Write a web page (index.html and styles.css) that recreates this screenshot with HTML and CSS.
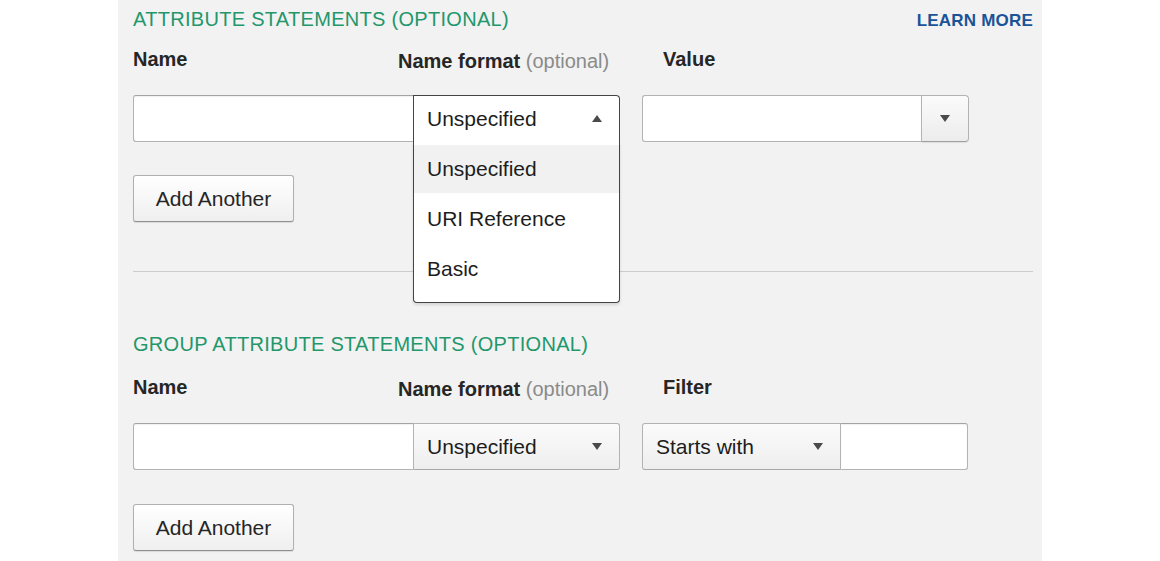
FILE: index.html
```html
<!DOCTYPE html>
<html lang="en">
<head>
<meta charset="utf-8">
<title>Attribute Statements</title>
<link rel="stylesheet" href="styles.css">
</head>
<body>
<div class="panel">
  <section class="section first">
    <div class="section-head">
      <h2 class="section-title">ATTRIBUTE STATEMENTS (OPTIONAL)</h2>
      <a class="learn-more" href="#">LEARN MORE</a>
    </div>
    <div class="labels">
      <div class="label">Name</div>
      <div class="label label-format">Name format <span class="optional">(optional)</span></div>
      <div class="label">Value</div>
    </div>
    <div class="row">
      <div class="text-input name-input"></div>
      <div class="select-wrap">
        <div class="select select-open">
          <span class="select-text">Unspecified</span>
          <span class="arrow arrow-up"></span>
        </div>
        <ul class="menu">
          <li class="menu-item active">Unspecified</li>
          <li class="menu-item">URI Reference</li>
          <li class="menu-item">Basic</li>
        </ul>
      </div>
      <div class="combo">
        <div class="combo-input"></div>
        <div class="combo-btn"><span class="arrow"></span></div>
      </div>
    </div>
    <button class="btn" type="button">Add Another</button>
  </section>

  <hr class="divider">

  <section class="section second">
    <div class="section-head">
      <h2 class="section-title">GROUP ATTRIBUTE STATEMENTS (OPTIONAL)</h2>
    </div>
    <div class="labels">
      <div class="label">Name</div>
      <div class="label label-format">Name format <span class="optional">(optional)</span></div>
      <div class="label">Filter</div>
    </div>
    <div class="row">
      <div class="text-input name-input"></div>
      <div class="select">
        <span class="select-text">Unspecified</span>
        <span class="arrow"></span>
      </div>
      <div class="filter">
        <div class="select filter-select">
          <span class="select-text">Starts with</span>
          <span class="arrow"></span>
        </div>
        <div class="text-input filter-input"></div>
      </div>
    </div>
    <button class="btn" type="button">Add Another</button>
  </section>
</div>
</body>
</html>
```

FILE: styles.css
```css
* {
  box-sizing: border-box;
}

html, body {
  margin: 0;
  padding: 0;
  background: #ffffff;
}

body {
  font-family: "Liberation Sans", Arial, sans-serif;
  color: #1d1d1d;
  height: 561px;
  overflow: hidden;
}

.panel {
  margin-left: 118px;
  width: 924px;
  min-height: 561px;
  background: #f2f2f2;
  padding: 7px 9px 0 15px;
}

.section-head {
  display: flex;
  justify-content: space-between;
  align-items: baseline;
}

.section-title {
  margin: 0;
  font-size: 20px;
  font-weight: normal;
  line-height: 24px;
  color: #23976b;
  letter-spacing: 0.3px;
}

.learn-more {
  font-size: 17px;
  font-weight: bold;
  color: #1a5497;
  text-decoration: none;
  letter-spacing: 0.2px;
}

.labels {
  display: grid;
  grid-template-columns: 265px 265px auto;
  margin-top: 16px;
}

.label {
  font-size: 20px;
  font-weight: bold;
  line-height: 24px;
  color: #262626;
}

.label-format {
  padding-top: 2px;
}

.optional {
  font-weight: normal;
  color: #8a8a8a;
}

.row {
  display: flex;
  margin-top: 22px;
  height: 47px;
  font-size: 21px;
}

.text-input {
  height: 47px;
  background: #ffffff;
  border: 1px solid #b3b3b3;
  border-top-color: #a3a3a3;
  box-shadow: inset 0 1px 1px rgba(0, 0, 0, 0.06);
}

.name-input {
  width: 280px;
  border-right: none;
  border-radius: 3px 0 0 3px;
}

.select-wrap {
  position: relative;
  width: 207px;
}

.select {
  position: relative;
  display: flex;
  align-items: center;
  justify-content: space-between;
  width: 207px;
  height: 47px;
  padding: 0 17px 0 13px;
  line-height: 45px;
  color: #1d1d1d;
  background: linear-gradient(#fbfbfb, #eeeeee);
  border: 1px solid #b3b3b3;
  border-bottom-color: #a8a8a8;
  border-radius: 0 3px 3px 0;
}

.select-open {
  background: #ffffff;
  border-color: #444444;
  border-bottom: none;
  border-radius: 0 4px 0 0;
  padding-bottom: 2px;
}

.arrow {
  width: 0;
  height: 0;
  border-left: 5px solid transparent;
  border-right: 5px solid transparent;
  border-top: 7px solid #4a4a4a;
}

.arrow-up {
  border-top: none;
  border-bottom: 7px solid #4a4a4a;
}

.menu {
  position: absolute;
  top: 100%;
  left: 0;
  right: 0;
  margin: 0;
  padding: 3px 0 9px;
  list-style: none;
  background: #ffffff;
  border: 1px solid #444444;
  border-top: none;
  border-radius: 0 0 4px 4px;
  box-shadow: 0 2px 3px rgba(0, 0, 0, 0.12);
  z-index: 5;
}

.menu-item {
  height: 48px;
  margin-bottom: 2px;
  padding-left: 13px;
  line-height: 47px;
  color: #1d1d1d;
}

.menu-item:last-child {
  margin-bottom: 0;
}

.menu-item.active {
  background: #f1f1f1;
}

.combo {
  display: flex;
  margin-left: 22px;
  width: 327px;
  height: 47px;
}

.combo-input {
  flex: 1;
  background: #ffffff;
  border: 1px solid #b3b3b3;
  border-right: none;
  border-radius: 3px 0 0 3px;
}

.combo-btn {
  width: 48px;
  display: flex;
  align-items: center;
  justify-content: center;
  background: linear-gradient(#fbfbfb, #ececec);
  border: 1px solid #b3b3b3;
  border-bottom-color: #a0a0a0;
  border-radius: 0 4px 4px 0;
  box-shadow: 0 1px 1px rgba(0, 0, 0, 0.08);
}

.filter {
  display: flex;
  margin-left: 22px;
}

.filter-select {
  width: 199px;
  padding-right: 17px;
  border-radius: 3px 0 0 3px;
}

.filter-input {
  width: 127px;
  border-left: none;
  border-radius: 0 3px 3px 0;
}

.btn {
  display: block;
  margin-top: 33px;
  width: 161px;
  height: 47px;
  padding: 0;
  font-family: "Liberation Sans", Arial, sans-serif;
  font-size: 21px;
  color: #262626;
  background: linear-gradient(#ffffff, #efefef);
  border: 1px solid #b0b0b0;
  border-bottom-color: #8f8f8f;
  border-radius: 3px;
  box-shadow: 0 1px 1px rgba(0, 0, 0, 0.1);
}

.divider {
  margin: 49px 0 0;
  border: none;
  border-top: 1px solid #cccccc;
  height: 0;
}

.second {
  padding-top: 60px;
}

.second .labels {
  margin-top: 19px;
}

.second .row {
  margin-top: 22px;
}

.second .btn {
  margin-top: 34px;
}
```
